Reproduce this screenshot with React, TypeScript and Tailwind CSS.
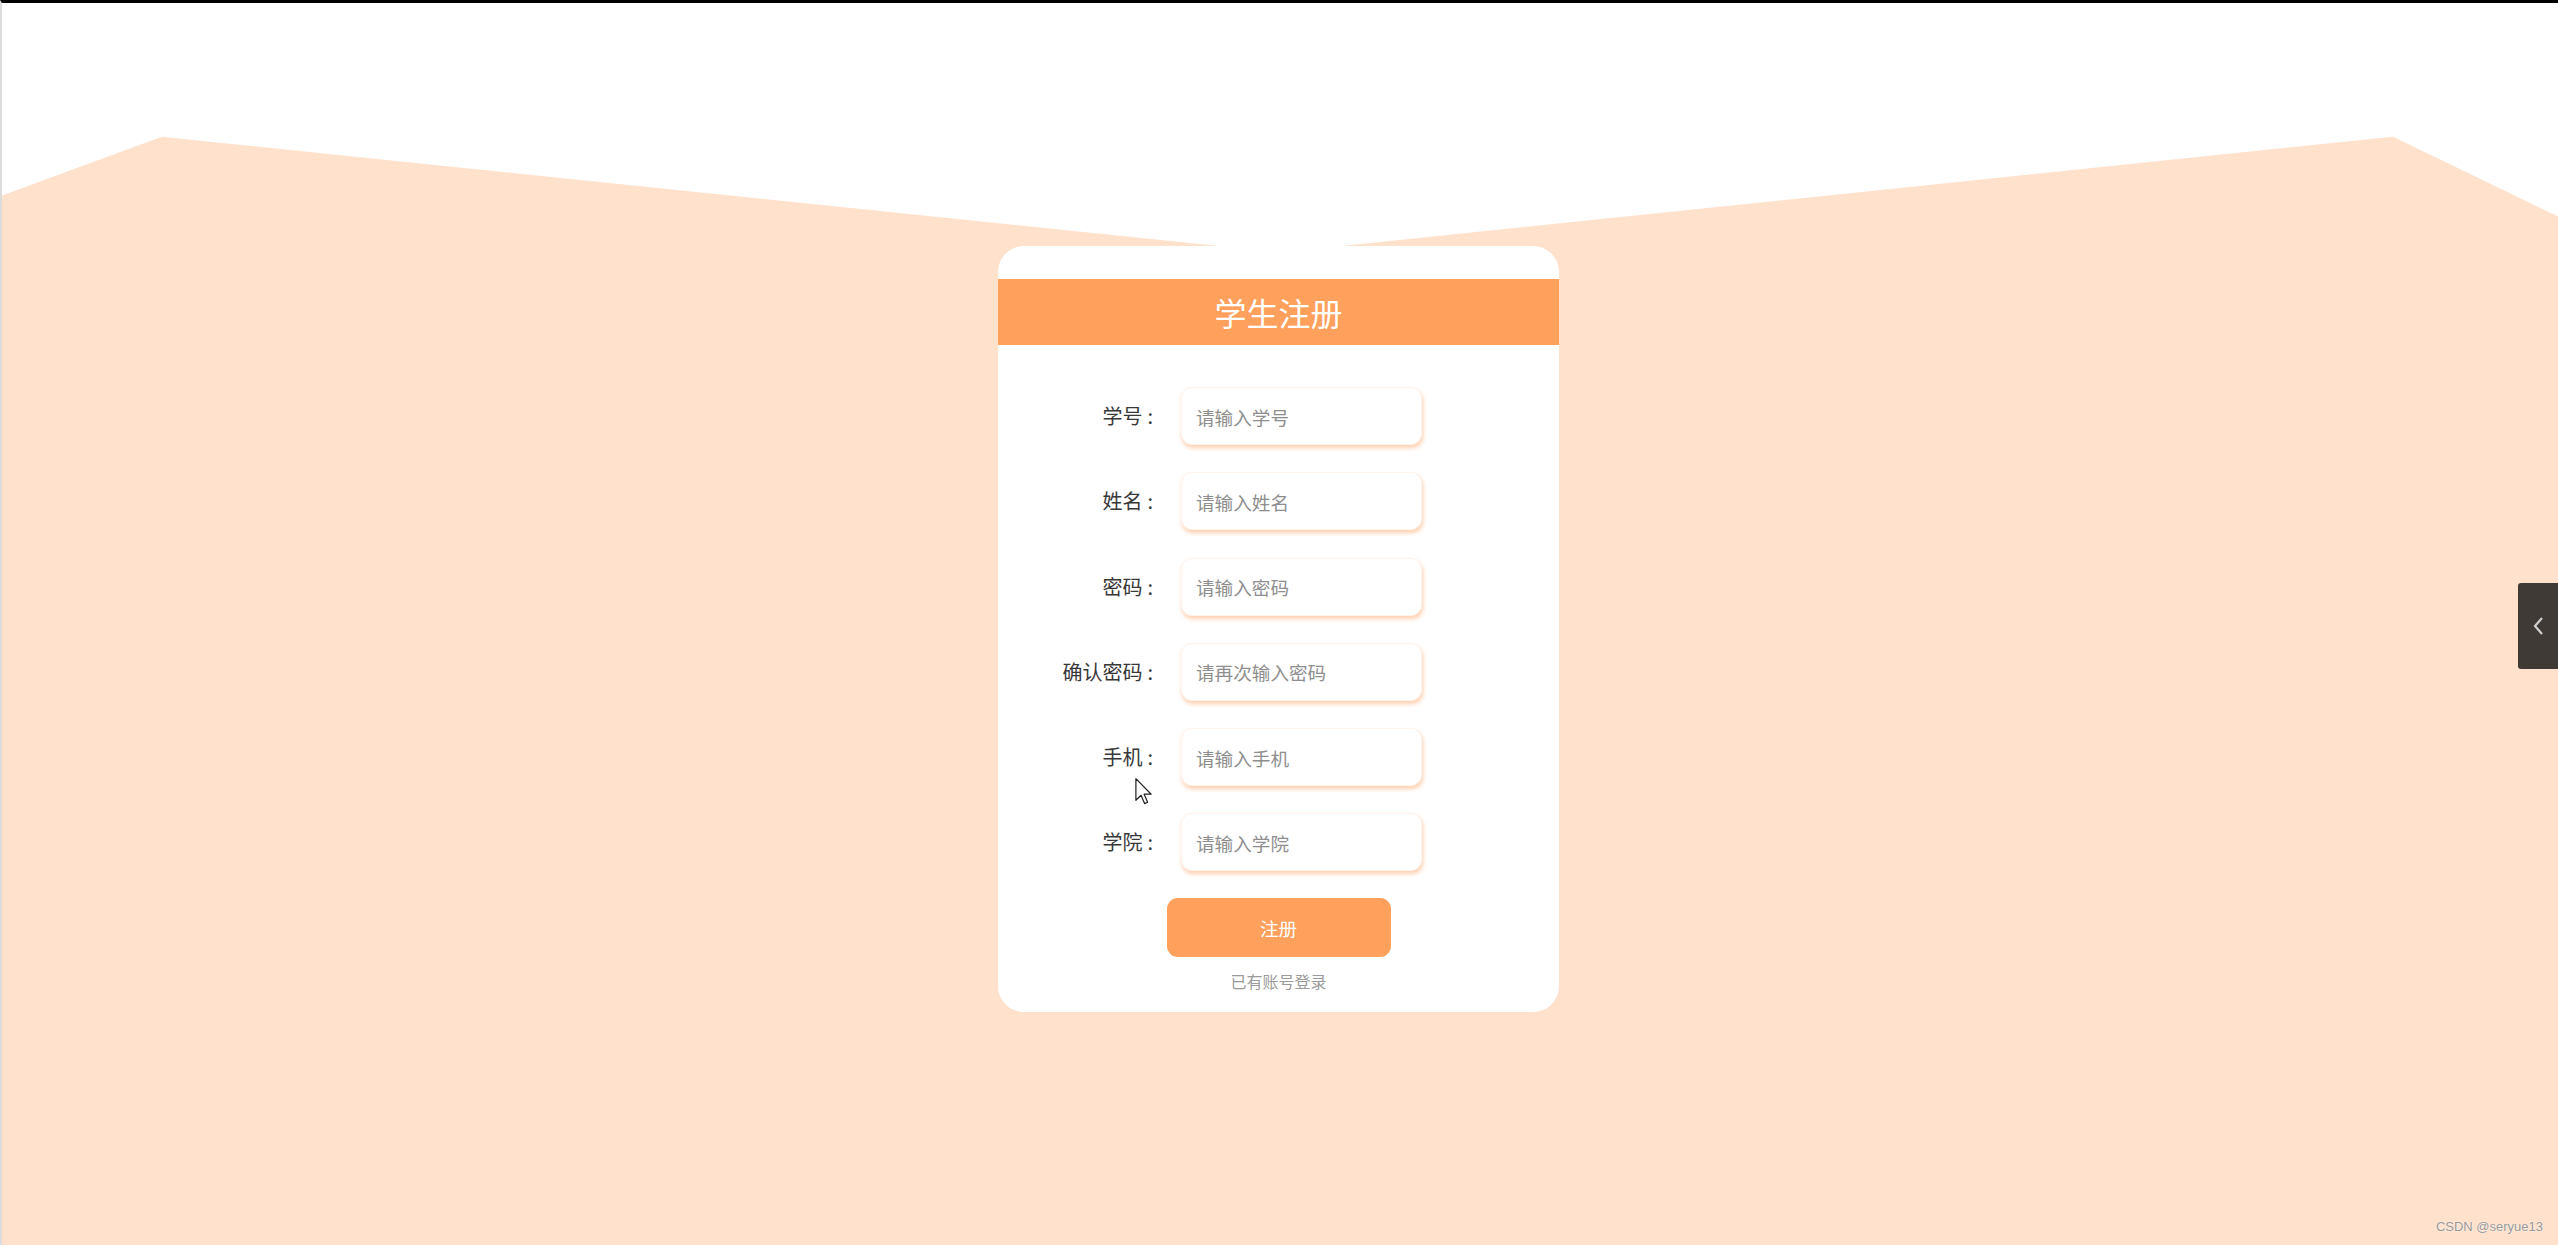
import React from 'react';

const fields = [
    { label: '学号', placeholder: '请输入学号' },
    { label: '姓名', placeholder: '请输入姓名' },
    { label: '密码', placeholder: '请输入密码', type: 'password' },
    { label: '确认密码', placeholder: '请再次输入密码', type: 'password' },
    { label: '手机', placeholder: '请输入手机' },
    { label: '学院', placeholder: '请输入学院' },
];

const cjk = { fontFamily: '"Noto Sans CJK SC", "Noto Sans", sans-serif' };

export default function App() {
    return (
        <div
            className="relative w-full h-[1245px] overflow-hidden bg-white border-t-[3px] border-black border-l-2 border-l-[#dcdcdc]"
            style={cjk}
        >
            {/* background shape */}
            <svg
                className="absolute inset-0 w-full h-full"
                viewBox="0 0 2558 1245"
                preserveAspectRatio="none"
            >
                <polygon
                    points="0,193 160,134 1279,250 2393,134 2558,214 2558,1245 0,1245"
                    fill="#ffe1cc"
                />
            </svg>

            {/* Register card */}
            <div className="relative pt-[243px] pr-[3px]">
                <div className="mx-auto w-[561px] bg-white rounded-[26px] pt-[33px] pb-[20px] flex flex-col items-center">
                    <div className="w-full h-[66px] bg-[#ffa05c] flex items-center justify-center">
                        <h1 className="text-[32px] text-white font-normal leading-none">学生注册</h1>
                    </div>

                    <form className="w-full mt-[42px] flex flex-col gap-[27.3px]">
                        {fields.map((f) => (
                            <div key={f.label} className="flex items-center">
                                <label className="w-[155px] flex justify-end text-[20px] text-[#383838] leading-none">
                                    <span>{f.label}</span>
                                    <span className="ml-[5px]">:</span>
                                </label>
                                <input
                                    type={f.type || 'text'}
                                    placeholder={f.placeholder}
                                    className="ml-[28px] w-[241px] h-[58px] rounded-[11px] bg-white px-[14px] text-[18.6px] text-[#333] placeholder:text-[#8e8e8e] outline-none border border-[#fff3ea] shadow-[1px_3px_4px_rgba(255,150,80,0.45)]"
                                    style={cjk}
                                />
                            </div>
                        ))}
                    </form>

                    <button
                        type="button"
                        className="mt-[27px] w-[224px] h-[59px] rounded-[11px] bg-[#ffa05c] text-white text-[18.6px]"
                        style={cjk}
                    >
                        注册
                    </button>
                    <a className="mt-[13px] text-[16px] leading-[22px] text-[#9a9a9a] cursor-pointer">已有账号登录</a>
                </div>
            </div>

            {/* side tab */}
            <div className="absolute right-0 top-[580px] w-[40px] h-[86px] bg-[#3f3a36] rounded-l-[3px] flex items-center justify-center">
                <svg width="14" height="20" viewBox="0 0 14 20" className="ml-[2px]">
                    <path d="M10 2 L3 10 L10 18" fill="none" stroke="#cfcfcf" strokeWidth="2.2" />
                </svg>
            </div>

            {/* mouse cursor */}
            <svg className="absolute left-[1133px] top-[775px]" width="18" height="27" viewBox="0 0 13 20">
                <path
                    d="M0.5 0.5 L0.5 16.5 L4.3 12.8 L7 19 L9.2 18 L6.6 12 L11.8 12 Z"
                    fill="#ffffff"
                    stroke="#222"
                    strokeWidth="0.9"
                    strokeLinejoin="round"
                />
            </svg>

            {/* watermark */}
            <div
                className="absolute right-[15px] bottom-[9px] text-[13px] text-[#999] [text-shadow:0_0_2px_#fff]"
                style={{ fontFamily: '"Liberation Sans", Arial, sans-serif' }}
            >
                CSDN @seryue13
            </div>
        </div>
    );
}
